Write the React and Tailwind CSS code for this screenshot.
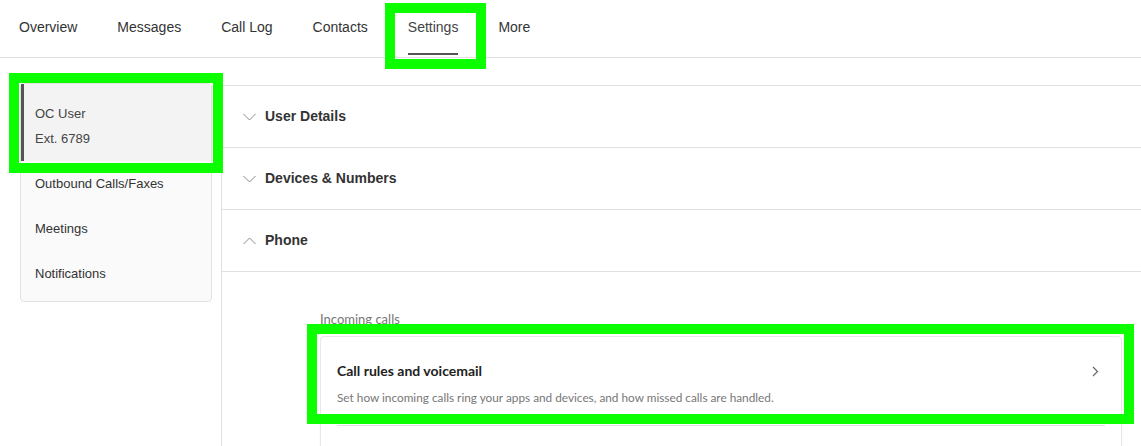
const tabs = ['Overview', 'Messages', 'Call Log', 'Contacts', 'Settings', 'More']
const sideItems = ['Outbound Calls/Faxes', 'Meetings', 'Notifications']
const sections = [
  { title: 'User Details', open: false },
  { title: 'Devices & Numbers', open: false },
  { title: 'Phone', open: true },
]

function Chevron({ open }) {
  return (
    <svg width="13" height="8" viewBox="0 0 13 8" className="shrink-0">
      <polyline
        points={open ? '0.5,7 6.5,1 12.5,7' : '0.5,1 6.5,7 12.5,1'}
        fill="none"
        stroke="#8a8a8a"
        strokeWidth="1"
      />
    </svg>
  )
}

function Highlight({ className }) {
  return <div className={`absolute border-[10px] border-[#0bff01] pointer-events-none ${className}`} />
}

export default function App() {
  return (
    <div className="relative w-[1141px] h-[446px] overflow-hidden bg-white font-['Liberation_Sans',Arial,sans-serif] text-[#333]">
      {/* Top tabs */}
      <div className="h-[58px] border-b border-[#e0e0e0] flex items-start pl-[19px] gap-10 text-[14px]">
        {tabs.map(tab => (
          <div key={tab} className="relative h-full pt-[17px]">
            <span className={tab === 'Settings' ? 'text-[#444]' : ''}>{tab}</span>
            {tab === 'Settings' && (
              <div className="absolute left-0 right-0 top-[53px] h-[2px] bg-[#555]" />
            )}
          </div>
        ))}
      </div>

      <div className="flex">
        {/* Sidebar */}
        <aside className="w-[221px] shrink-0 pl-5 pt-[25px]">
          <div className="w-[192px] bg-[#fafafa] border border-[#e2e2e2] rounded-[4px] pb-[5px] text-[13px]">
            <div className="bg-[#f3f3f3] border-l-[3px] border-[#555] pl-[11px] pt-[17px] pb-[10px] leading-[25px] text-[#444]">
              <div>OC User</div>
              <div>Ext. 6789</div>
            </div>
            {sideItems.map(item => (
              <div key={item} className="h-[45px] flex items-center pl-[14px] text-[#333]">
                {item}
              </div>
            ))}
          </div>
        </aside>

        {/* Main */}
        <main className="flex-1 mt-[27px] border-l border-t border-[#e0e0e0] h-[400px]">
          {sections.map(s => (
            <div key={s.title} className="h-[62px] border-b border-[#e0e0e0] flex items-center pl-[21px] gap-[9px]">
              <Chevron open={s.open} />
              <span className="text-[14px] font-bold text-[#333]">{s.title}</span>
            </div>
          ))}

          <div className="pl-[98px] pr-[19px] pt-[39px] font-['Lato',sans-serif]">
            <div className="text-[13px] leading-[16px] text-[#777] mb-[9px]">Incoming calls</div>
            <div className="border border-[#e8e8e8] rounded-[4px] shadow-[0_1px_2px_rgba(0,0,0,0.06)] bg-white">
              <div className="mx-[16px] pt-[24px] pb-[20px] border-b border-[#e0e0e0] flex items-start">
                <div className="flex-1">
                  <div className="text-[14px] leading-[20px] font-bold text-[#222]">Call rules and voicemail</div>
                  <div className="mt-[10px] text-[11.8px] leading-[14px] text-[#777]">
                    Set how incoming calls ring your apps and devices, and how missed calls are handled.
                  </div>
                </div>
                <svg width="7" height="11" viewBox="0 0 7 11" className="mt-[5px] mr-[6px]">
                  <polyline points="1,1 5.5,5.5 1,10" fill="none" stroke="#666" strokeWidth="1.2" />
                </svg>
              </div>
              <div className="h-[40px]" />
            </div>
          </div>
        </main>
      </div>

      {/* annotation boxes */}
      <Highlight className="left-[385px] top-[3px] w-[101px] h-[66px]" />
      <Highlight className="left-[9px] top-[73px] w-[214px] h-[100px]" />
      <Highlight className="left-[307px] top-[324px] w-[827px] h-[100px]" />
    </div>
  )
}
